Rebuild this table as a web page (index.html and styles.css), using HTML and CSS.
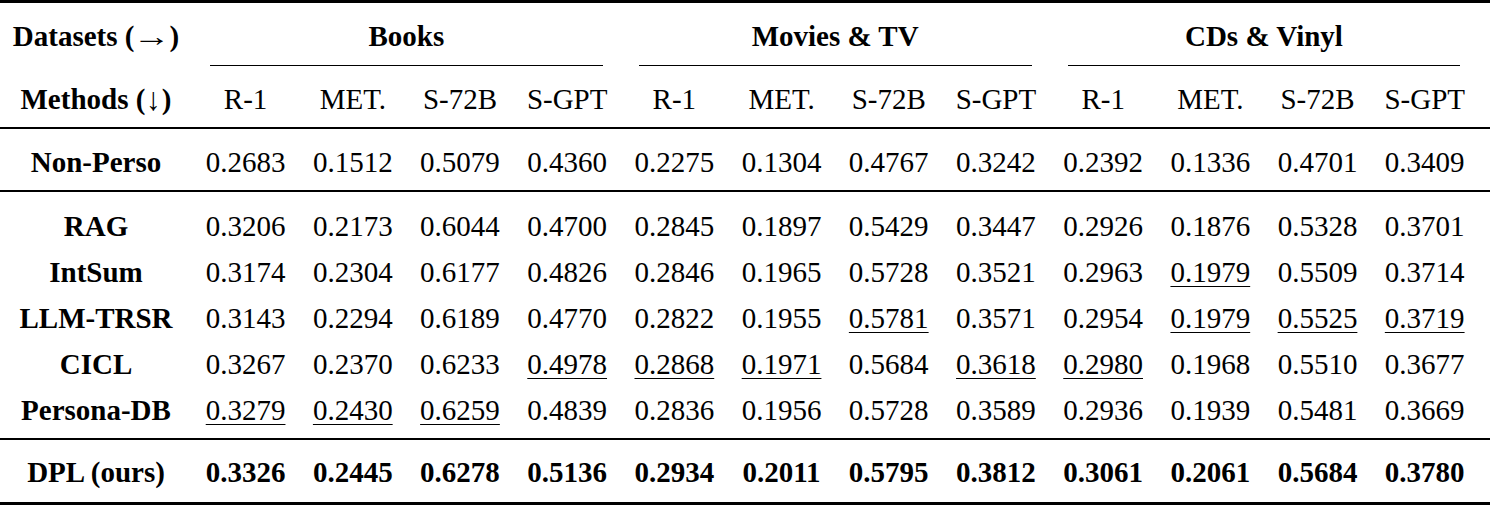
FILE: index.html
```html
<!DOCTYPE html>
<html lang="en">
<head>
<meta charset="utf-8">
<title>Results table</title>
<link rel="stylesheet" href="styles.css">
</head>
<body>
<table class="results">
  <colgroup>
    <col class="c-label">
    <col class="c-num"><col class="c-num"><col class="c-num"><col class="c-num">
    <col class="c-num"><col class="c-num"><col class="c-num"><col class="c-num">
    <col class="c-num"><col class="c-num"><col class="c-num"><col class="c-last">
  </colgroup>
  <thead>
    <tr class="r-groups">
      <th class="label">Datasets (<span class="arrow arrow-right">→</span>)</th>
      <th colspan="4" class="group"><div class="group-title">Books</div></th>
      <th colspan="4" class="group"><div class="group-title">Movies &amp; TV</div></th>
      <th colspan="4" class="group"><div class="group-title">CDs &amp; Vinyl</div></th>
    </tr>
    <tr class="r-metrics">
      <th class="label">Methods (<span class="arrow arrow-down">↓</span>)</th>
      <th>R-1</th><th>MET.</th><th>S-72B</th><th>S-GPT</th>
      <th>R-1</th><th>MET.</th><th>S-72B</th><th>S-GPT</th>
      <th>R-1</th><th>MET.</th><th>S-72B</th><th>S-GPT</th>
    </tr>
  </thead>
  <tbody class="b-base">
    <tr>
      <th class="label">Non-Perso</th>
      <td>0.2683</td><td>0.1512</td><td>0.5079</td><td>0.4360</td>
      <td>0.2275</td><td>0.1304</td><td>0.4767</td><td>0.3242</td>
      <td>0.2392</td><td>0.1336</td><td>0.4701</td><td>0.3409</td>
    </tr>
  </tbody>
  <tbody class="b-baselines">
    <tr>
      <th class="label">RAG</th>
      <td>0.3206</td><td>0.2173</td><td>0.6044</td><td>0.4700</td>
      <td>0.2845</td><td>0.1897</td><td>0.5429</td><td>0.3447</td>
      <td>0.2926</td><td>0.1876</td><td>0.5328</td><td>0.3701</td>
    </tr>
    <tr>
      <th class="label">IntSum</th>
      <td>0.3174</td><td>0.2304</td><td>0.6177</td><td>0.4826</td>
      <td>0.2846</td><td>0.1965</td><td>0.5728</td><td>0.3521</td>
      <td>0.2963</td><td><span class="second">0.1979</span></td><td>0.5509</td><td>0.3714</td>
    </tr>
    <tr>
      <th class="label">LLM-TRSR</th>
      <td>0.3143</td><td>0.2294</td><td>0.6189</td><td>0.4770</td>
      <td>0.2822</td><td>0.1955</td><td><span class="second">0.5781</span></td><td>0.3571</td>
      <td>0.2954</td><td><span class="second">0.1979</span></td><td><span class="second">0.5525</span></td><td><span class="second">0.3719</span></td>
    </tr>
    <tr>
      <th class="label">CICL</th>
      <td>0.3267</td><td>0.2370</td><td>0.6233</td><td><span class="second">0.4978</span></td>
      <td><span class="second">0.2868</span></td><td><span class="second">0.1971</span></td><td>0.5684</td><td><span class="second">0.3618</span></td>
      <td><span class="second">0.2980</span></td><td>0.1968</td><td>0.5510</td><td>0.3677</td>
    </tr>
    <tr>
      <th class="label">Persona-DB</th>
      <td><span class="second">0.3279</span></td><td><span class="second">0.2430</span></td><td><span class="second">0.6259</span></td><td>0.4839</td>
      <td>0.2836</td><td>0.1956</td><td>0.5728</td><td>0.3589</td>
      <td>0.2936</td><td>0.1939</td><td>0.5481</td><td>0.3669</td>
    </tr>
  </tbody>
  <tbody class="b-ours">
    <tr>
      <th class="label">DPL (ours)</th>
      <td>0.3326</td><td>0.2445</td><td>0.6278</td><td>0.5136</td>
      <td>0.2934</td><td>0.2011</td><td>0.5795</td><td>0.3812</td>
      <td>0.3061</td><td>0.2061</td><td>0.5684</td><td>0.3780</td>
    </tr>
  </tbody>
</table>
</body>
</html>
```

FILE: styles.css
```css
html, body {
  margin: 0;
  padding: 0;
  background: #ffffff;
}

.results {
  border-collapse: separate;
  border-spacing: 0;
  table-layout: fixed;
  width: 1490px;
  font-family: "Liberation Serif", "Times New Roman", serif;
  font-size: 29px;
  line-height: 46px;
  color: #000000;
}

.c-label { width: 192px; }
.c-num { width: 107.2px; }
.c-last { width: 119.2px; }

.results th,
.results td {
  padding: 0;
  text-align: center;
  vertical-align: top;
  white-space: nowrap;
  font-weight: 400;
}

.results th:last-child,
.results td:last-child {
  padding-right: 12px;
}

.results .label {
  font-weight: 700;
}

.arrow {
  display: inline-block;
  line-height: 0;
  font-weight: 400;
}

.arrow-right {
  margin: 0 3px;
  transform: scaleX(1.3);
}

.arrow-down {
  margin: 0 1px;
  transform: scaleY(1.1);
}

/* header: dataset groups */
.r-groups th {
  border-top: 3px solid #000;
  padding-top: 10px;
  padding-bottom: 10px;
  font-weight: 700;
}

.group-title {
  margin: 0 18px;
  padding-bottom: 6px;
  border-bottom: 1px solid #000;
}

/* header: metrics */
.r-metrics th {
  padding-bottom: 5px;
  border-bottom: 2px solid #000;
}

/* non-personalized row */
.b-base th,
.b-base td {
  padding-top: 10px;
  padding-bottom: 5px;
  border-bottom: 2px solid #000;
}

/* baselines block */
.b-baselines tr:first-child th,
.b-baselines tr:first-child td {
  padding-top: 11px;
}

.b-baselines tr:last-child th,
.b-baselines tr:last-child td {
  padding-bottom: 5px;
  border-bottom: 2px solid #000;
}

.second {
  text-decoration: underline;
  text-decoration-thickness: 1px;
  text-underline-offset: 4px;
}

/* ours */
.b-ours th,
.b-ours td {
  padding-top: 9px;
  padding-bottom: 7px;
  border-bottom: 3px solid #000;
  font-weight: 700;
}
```
